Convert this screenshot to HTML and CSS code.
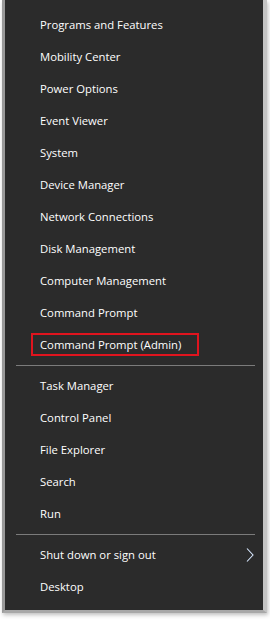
FILE: index.html
```html
<html>
  <head>
    <link rel="stylesheet" href="styles.css">
  </head>
  <body>
    <div class="menu">
        <!-- 上のグループ -->
        <ul class="group">
            <li class="item">Programs and Features</li>
            <li class="item">Mobility Center</li>
            <li class="item">Power Options</li>
            <li class="item">Event Viewer</li>
            <li class="item">System</li>
            <li class="item">Device Manager</li>
            <li class="item">Network Connections</li>
            <li class="item">Disk Management</li>
            <li class="item">Computer Management</li>
            <li class="item">Command Prompt</li>
            <li class="item"><span class="marked">Command Prompt (Admin)</span></li>
        </ul>
        <div class="sep"></div>
        <ul class="group">
            <li class="item">Task Manager</li>
            <li class="item">Control Panel</li>
            <li class="item">File Explorer</li>
            <li class="item">Search</li>
            <li class="item">Run</li>
        </ul>
        <div class="sep"></div>
        <ul class="group">
            <li class="item sub">Shut down or sign out
                <svg class="chev" width="8" height="14" viewBox="0 0 8 14">
                    <path d="M1 0.5 L7 7 L1 13.5" fill="none" stroke="#d8e8ff" stroke-width="1.1"/>
                </svg>
            </li>
            <li class="item">Desktop</li>
        </ul>
    </div>
  </body>
</html>
```

FILE: styles.css
```css
* {
  margin: 0;
  padding: 0;
  border: 0;
}
li {
    list-style: none;
}
body {
    background-color: #fff;
    font-family: "Open Sans", "Noto Sans", sans-serif;
}
.menu {
    margin-left: 2px;
    width: 258px;
    background-color: #2b2b2b;
    border-left: 3px solid #9a9a9a;
    border-right: 4px solid #c4c4c4;
    border-bottom: 3px solid #a8a8a8;
    padding: 9px 0 7px 0;
    box-shadow: 1px 2px 4px rgba(0, 0, 0, .25);
}
.item {
    position: relative;
    height: 32px;
    line-height: 32px;
    padding-left: 35px;
    color: #fff;
    font-size: 11.3px;
}
.marked {
    display: inline-block;
    line-height: 19px;
    margin-left: -9px;
    padding: 0 16px 0 7px;
    border: 2px solid #e0141e;
}
.sep {
    height: 1px;
    margin: 4px 8px 4px 11px;
    background-color: #7b7b7b;
}
.chev {
    position: absolute;
    right: 9px;
    top: 9px;
}
```
